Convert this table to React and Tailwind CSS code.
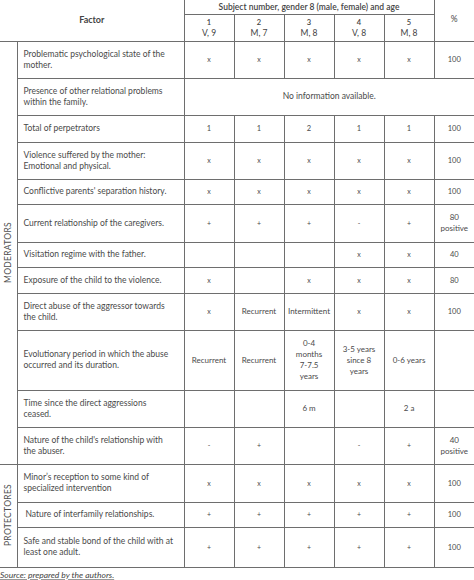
const rows = [
  { f: 'Problematic psychological state of the mother.', v: ['x', 'x', 'x', 'x', 'x'], p: '100', h: 'h-[37px]' },
  { f: 'Presence of other relational problems within the family.', span: 'No information available.', h: 'h-[37px]' },
  { f: 'Total of perpetrators', v: ['1', '1', '2', '1', '1'], p: '100', h: 'h-[27px]' },
  { f: 'Violence suffered by the mother: Emotional and physical.', v: ['x', 'x', 'x', 'x', 'x'], p: '100', h: 'h-[37px]' },
  { f: "Conflictive parents' separation history.", v: ['x', 'x', 'x', 'x', 'x'], p: '100', h: 'h-[25px]' },
  { f: 'Current relationship of the caregivers.', v: ['+', '+', '+', '-', '+'], p: '80\npositive', h: 'h-[38px]' },
  { f: 'Visitation regime with the father.', v: ['', '', '', 'x', 'x'], p: '40', h: 'h-[25px]' },
  { f: 'Exposure of the child to the violence.', v: ['x', '', 'x', 'x', 'x'], p: '80', h: 'h-[26px]' },
  { f: 'Direct abuse of the aggressor towards the child.', v: ['x', 'Recurrent', 'Intermittent', 'x', 'x'], p: '100', h: 'h-[37px]' },
  { f: 'Evolutionary period in which the abuse occurred and its duration.', v: ['Recurrent', 'Recurrent', '0-4\nmonths\n7-7.5\nyears', '3-5 years\nsince 8\nyears', '0-6 years'], p: '', h: 'h-[60px]' },
  { f: 'Time since the direct aggressions ceased.', v: ['', '', '6 m', '', '2 a'], p: '', h: 'h-[37px]' },
  { f: "Nature of the child's relationship with the abuser.", v: ['-', '+', '', '-', '+'], p: '40\npositive', h: 'h-[37px]' },
]

const protect = [
  { f: 'Minor’s reception to some kind of specialized intervention', v: ['x', 'x', 'x', 'x', 'x'], p: '100', h: 'h-[38px]' },
  { f: 'Nature of interfamily relationships.', v: ['+', '+', '+', '+', '+'], p: '100', h: 'h-[25px]', indent: true },
  { f: 'Safe and stable bond of the child with at least one adult.', v: ['+', '+', '+', '+', '+'], p: '100', h: 'h-[40px]' },
]

const subjects = [
  ['1', 'V, 9'],
  ['2', 'M, 7'],
  ['3', 'M, 8'],
  ['4', 'V, 8'],
  ['5', 'M, 8'],
]

const cell = 'border border-[#6e6e6e] text-center align-middle px-[2px] leading-[11px] whitespace-pre-line'

function sizeFor(v) {
  if (v === 'x' || v === '+' || v === '-') return 'text-[7px]'
  if (/^\d+$/.test(v)) return 'text-[7.5px]'
  return 'text-[8px]'
}

function DataRow({ r, first, label, count }) {
  return (
    <tr className={r.h}>
      {first && (
        <td rowSpan={count} className="border border-l-0 border-[#6e6e6e] align-middle p-0">
          <div className="flex justify-center">
            <span className="[writing-mode:vertical-lr] rotate-180 text-[8.5px] tracking-[0.3px] text-[#505050]">{label}</span>
          </div>
        </td>
      )}
      <td className={`border border-[#6e6e6e] text-left align-middle leading-[11px] ${r.indent ? 'pl-[8px]' : 'pl-[6px]'} pr-[10px]`}>
        {r.f}
      </td>
      {r.span ? (
        <td colSpan={6} className="border border-[#6e6e6e] border-x-0 text-center align-middle">{r.span}</td>
      ) : (
        <>
          {r.v.map((v, i) => (
            <td key={i} className={`${cell} ${sizeFor(v)}`}>{v}</td>
          ))}
          <td className={`${cell} border-r-0 ${r.p.includes('positive') ? 'text-[8px]' : 'text-[7.5px]'}`}>{r.p}</td>
        </>
      )}
    </tr>
  )
}

export default function App() {
  return (
    <div className="w-[474px] h-[580px] overflow-hidden bg-white text-[#4a4a4a] text-[8.5px] font-['Lato','Open_Sans',sans-serif]">
      <table className="w-[474px] table-fixed border-collapse">
        <colgroup>
          <col className="w-[17px]" />
          <col className="w-[167px]" />
          <col className="w-[50px]" />
          <col className="w-[50px]" />
          <col className="w-[50px]" />
          <col className="w-[50px]" />
          <col className="w-[50px]" />
          <col className="w-[40px]" />
        </colgroup>
        <tbody>
          <tr className="h-[14px]">
            <td colSpan={2} rowSpan={2} className="border border-t-0 border-l-0 border-[#6e6e6e] text-center align-middle font-bold text-[9px] text-[#444] pb-[2px]">
              Factor
            </td>
            <td colSpan={5} className="border border-t-0 border-[#6e6e6e] text-center align-middle font-semibold text-[8.5px] text-[#444] leading-[12px]">
              Subject number, gender 8 (male, female) and age
            </td>
            <td rowSpan={2} className="border border-t-0 border-r-0 border-[#6e6e6e] text-center align-middle text-[#444] pb-[2px]">
              %
            </td>
          </tr>
          <tr className="h-[27px]">
            {subjects.map(([n, g]) => (
              <td key={n} className="border border-[#6e6e6e] text-center align-middle leading-[11px] text-[#444]">
                <div className="text-[7.5px] font-semibold">{n}</div>
                <div>{g}</div>
              </td>
            ))}
          </tr>
          {rows.map((r, i) => (
            <DataRow key={i} r={r} first={i === 0} label="MODERATORS" count={rows.length} />
          ))}
          {protect.map((r, i) => (
            <DataRow key={i} r={r} first={i === 0} label="PROTECTORES" count={protect.length} />
          ))}
        </tbody>
      </table>
      <p className="mt-[1px] text-[8.5px] italic text-[#444] underline decoration-[#999]">Source: prepared by the authors.</p>
    </div>
  )
}
